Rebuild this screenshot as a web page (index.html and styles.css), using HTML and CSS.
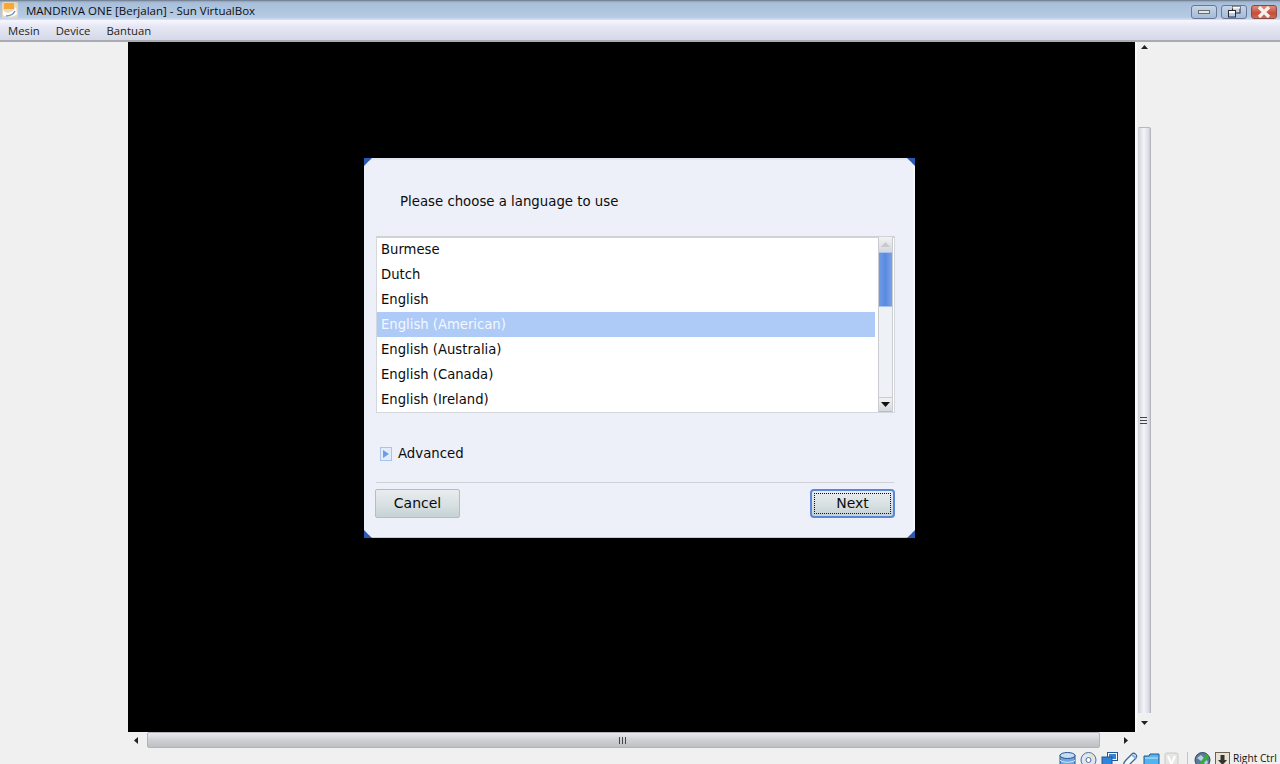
FILE: index.html
```html
<!DOCTYPE html>
<html lang="id">
<head>
<meta charset="utf-8">
<title>MANDRIVA ONE [Berjalan] - Sun VirtualBox</title>
<link rel="stylesheet" href="styles.css">
</head>
<body>
<div class="window">
  <header class="titlebar">
    <svg class="app-icon" width="18" height="18" viewBox="0 0 18 18"><rect x="1" y="1" width="16" height="16" rx="2" fill="#e9d9b8"/><path d="M3 2h10v6H3z" fill="#f3a83c"/><path d="M2 9c3 4 9 4 13-3l1 7c-3 3-10 4-14 1z" fill="#fff"/><path d="M5 15c3 0 7-1 9-5" stroke="#6f93c8" stroke-width="1.500" fill="none"/></svg>
    <span class="title-text">MANDRIVA ONE [Berjalan] - Sun VirtualBox</span>
    <div class="win-controls">
      <button class="win-btn"><svg width="12" height="4" viewBox="0 0 12 4"><rect x="0.500" y="0.500" width="11" height="3" fill="#e6e6e6" stroke="#6a6a6a"/></svg></button>
      <button class="win-btn"><svg width="14" height="13" viewBox="0 0 14 13"><rect x="5.500" y="1.500" width="7.500" height="6.500" fill="#c6d4e6" stroke="#2b2b2b"/><rect x="5.500" y="1.500" width="7.500" height="2" fill="#fff"/><rect x="1.500" y="5.500" width="7" height="6.500" fill="#b9cbe2" stroke="#2b2b2b"/><rect x="2" y="6" width="6" height="2" fill="#fff"/></svg></button>
      <button class="win-btn win-close"><svg width="14" height="12" viewBox="0 0 14 12"><path d="M2 1l10 10M12 1L2 11" stroke="#f4f0ec" stroke-width="3.400"/></svg></button>
    </div>
  </header>
  <nav class="menubar"><span>Mesin</span><span>Device</span><span>Bantuan</span></nav>
  <main class="content">
    <div class="vm-screen">
      <section class="dialog">
        <i class="corner tl"></i><i class="corner tr"></i><i class="corner bl"></i><i class="corner br"></i>
        <p class="prompt">Please choose a language to use</p>
        <div class="listbox">
          <ul class="rows">
            <li>Burmese</li>
            <li>Dutch</li>
            <li>English</li>
            <li class="selected">English (American)</li>
            <li>English (Australia)</li>
            <li>English (Canada)</li>
            <li>English (Ireland)</li>
          </ul>
          <div class="list-scroll">
            <div class="ls-btn ls-up"><svg width="9" height="5" viewBox="0 0 9 5"><path d="M4.500 0L9 5H0z" fill="#c4c8d0"/></svg></div>
            <div class="ls-thumb"></div>
            <div class="ls-track"></div>
            <div class="ls-btn ls-down"><svg width="9" height="5" viewBox="0 0 9 5"><path d="M0 0h9L4.500 5z" fill="#111"/></svg></div>
          </div>
        </div>
        <div class="advanced">
          <span class="expander"><svg width="6" height="8" viewBox="0 0 6 8"><path d="M0 0l6 4-6 4z" fill="#6f9be8"/></svg></span>
          <span>Advanced</span>
        </div>
        <hr class="sep">
        <div class="actions">
          <button class="btn"><span class="btn-label">Cancel</span></button>
          <button class="btn btn-default"><span class="focus"><span class="btn-label">Next</span></span></button>
        </div>
      </section>
    </div>
    <div class="vscroll">
      <div class="sb-arrow sb-up"><svg width="7" height="4" viewBox="0 0 7 4"><path d="M3.500 0L7 4H0z" fill="#222"/></svg></div>
      <div class="vs-track"></div>
      <div class="vs-thumb"><svg width="7" height="7" viewBox="0 0 7 7"><path d="M0 .5h7M0 3.500h7M0 6.500h7" stroke="#444"/></svg></div>
      <div class="sb-arrow sb-down"><svg width="7" height="4" viewBox="0 0 7 4"><path d="M0 0h7L3.500 4z" fill="#222"/></svg></div>
    </div>
  </main>
  <div class="hscroll-row">
    <div class="hscroll">
      <div class="hs-arrow hs-left"><svg width="4" height="7" viewBox="0 0 4 7"><path d="M4 0v7L0 3.500z" fill="#222"/></svg></div>
      <div class="hs-thumb"><svg width="7" height="7" viewBox="0 0 7 7"><path d="M.5 0v7M3.500 0v7M6.500 0v7" stroke="#444"/></svg></div>
      <div class="hs-arrow hs-right"><svg width="4" height="7" viewBox="0 0 4 7"><path d="M0 0v7l4-3.500z" fill="#222"/></svg></div>
    </div>
  </div>
  <footer class="statusbar">
    <svg class="st" width="17" height="16" viewBox="0 0 17 16"><path d="M1 3v10c0 2 15 2 15 0V3z" fill="#6fa6dc" stroke="#27568f"/><ellipse cx="8.500" cy="3.500" rx="7.500" ry="3" fill="#c6dcf2" stroke="#27568f"/><path d="M1 8c2 3 13 3 15 0" fill="none" stroke="#dcecf9"/></svg>
    <svg class="st" width="17" height="16" viewBox="0 0 17 16"><circle cx="8.500" cy="8" r="7.500" fill="#dfe6ee" stroke="#4a6f9c"/><circle cx="8.500" cy="8" r="2.500" fill="#fff" stroke="#4a6f9c"/><path d="M10 2l3 3" stroke="#f0e4a8" stroke-width="2"/></svg>
    <svg class="st" width="17" height="16" viewBox="0 0 17 16"><rect x="6.500" y="0.500" width="10" height="8" fill="#fff" stroke="#27568f"/><rect x="8" y="2" width="7" height="5" fill="#2f85dc"/><rect x="1" y="5" width="10" height="10" fill="#2f85dc" stroke="#27568f"/></svg>
    <svg class="st" width="17" height="16" viewBox="0 0 17 16"><path d="M2 15c-1-3 0-5 2-7l6-6c2-2 6 1 4 4l-7 7c-1 1-4 3-5 2z" fill="#f4f7fb" stroke="#3a689c" stroke-width="1.300"/><path d="M10 3l4 3" stroke="#7fb0e0" stroke-width="2"/></svg>
    <svg class="st" width="17" height="16" viewBox="0 0 17 16"><path d="M1 4h5l1-2h9v13H1z" fill="#55b4ee" stroke="#27568f"/><path d="M2 6h13" stroke="#bfe6fb"/></svg>
    <svg class="st" width="15" height="16" viewBox="0 0 15 16"><rect x="1" y="1" width="13" height="14" rx="2" fill="#e6e6e4" stroke="#c9c9c6"/><path d="M4 4l3.500 8L11 4" fill="none" stroke="#fff" stroke-width="2"/></svg>
    <i class="st-sep"></i>
    <svg class="st st-globe" width="17" height="16" viewBox="0 0 17 16"><circle cx="8.500" cy="8" r="7.500" fill="#5c7a9a" stroke="#2f4660"/><path d="M3 6l4-3 3 3-3 3zM10 10l3-2 1 3-3 2z" fill="#b8cfe2"/><path d="M5 15L14 3" stroke="#35b035" stroke-width="3"/></svg>
    <span class="st-key"><svg width="9" height="10" viewBox="0 0 9 10"><path d="M2.500 0h4v5H9L4.500 10 0 5h2.500z" fill="#333"/></svg></span>
    <span class="st-label">Right Ctrl</span>
  </footer>
</div>
</body>
</html>
```

FILE: styles.css
```css
* { box-sizing: border-box; }
html, body { margin: 0; padding: 0; height: 100%; overflow: hidden; }
body { background: #f0f0f0; font-family: "Open Sans", "Noto Sans", sans-serif; color: #111; }
svg { display: block; flex: none; }
.window { width: 1280px; height: 764px; display: flex; flex-direction: column; overflow: hidden; }

/* title bar */
.titlebar {
  height: 20px; flex: none; display: flex; align-items: center;
  background: linear-gradient(#5f6670 0, #8ea3bf 1px, #a9bfd9 3px, #b6cae3 17px, #d5e2f1 20px);
}
.app-icon { margin-left: 1px; }
.title-text { margin-left: 7px; font-size: 11.500px; color: #0c0f14; white-space: nowrap; }
.win-controls { margin-left: auto; display: flex; gap: 4px; margin-right: 3px; padding-top: 3px; }
.win-btn {
  width: 26px; height: 14px; padding: 0; display: flex; align-items: center; justify-content: center;
  border: 1px solid #66799a; border-radius: 3px;
  background: linear-gradient(#c5d5e8, #a5bad6);
}
.win-close { border-color: #8a4a44; background: linear-gradient(#de8c7c, #c64c3a 60%, #cf6a56); }

/* menu */
.menubar {
  height: 22px; flex: none; display: flex; align-items: center; gap: 16px; padding: 0 0 0 8px;
  font-size: 11.300px; color: #1c1e24;
  background: linear-gradient(#f6f7fd, #e6e8f4 6px, #d5d8e8);
  border-bottom: 2px solid #a8abb2;
}

/* guest area */
.content { flex: 1; min-height: 0; display: flex; padding-left: 128px; background: #f0f0f0; }
.vm-screen { width: 1007px; background: #000; padding: 116px 0 0 236px; }

.dialog {
  position: relative; width: 551px; height: 380px;
  background: #edf0f8; border-radius: 6px; padding: 0 20px 0 11px;
  border-bottom: 1px solid #c6c9d0;
  box-shadow: inset 0 2px 1px #e2e6f0, inset -2px 0 1px #f7f9fd;
  font-family: "DejaVu Sans", sans-serif; font-size: 13.300px; color: #0c0c0c;
}
.corner { position: absolute; width: 8px; height: 8px; }
.tl { left: 0; top: 0; clip-path: polygon(0 0, 100% 0, 0 100%); background: radial-gradient(circle at 100% 100%, #edf0f8 5px, #2c59b4 6px); }
.tr { right: 0; top: 0; clip-path: polygon(0 0, 100% 0, 100% 100%); background: radial-gradient(circle at 0 100%, #edf0f8 5px, #2c59b4 6px); }
.bl { left: 0; bottom: -1px; clip-path: polygon(0 0, 100% 100%, 0 100%); background: radial-gradient(circle at 100% 0, #edf0f8 5px, #2c59b4 6px); }
.br { right: 0; bottom: -1px; clip-path: polygon(100% 0, 100% 100%, 0 100%); background: radial-gradient(circle at 0 0, #edf0f8 5px, #2c59b4 6px); }
.prompt { margin: 0; padding: 34px 0 0 25px; height: 78px; line-height: 19px; }

.listbox {
  width: 519px; height: 177px; margin-left: 1px; display: flex;
  background: #fff; border: 1px solid #d4d7db; border-top: 2px solid #cfd2d6; padding-right: 1px;
}
.rows { list-style: none; margin: -1px 0 0; padding: 0; width: 498px; flex: none; font-size: 13.200px; }
.rows li { height: 25px; line-height: 25px; padding-left: 4px; white-space: nowrap; }
.rows li.selected { background: #aecbf8; color: #f4f7fd; }
.list-scroll {
  margin: -1px 0 0 3px; width: 15px; display: flex; flex-direction: column;
  background: #eef1f6; border: 1px solid #c9ccd1; border-width: 0 1px;
}
.ls-btn { height: 15px; flex: none; display: flex; align-items: center; justify-content: center; background: linear-gradient(#f2f2f2, #d5d8dc); }
.ls-down { border-top: 1px solid #c9ccd1; border-bottom: 1px solid #b9bcc1; }
.ls-thumb { height: 55px; flex: none; background: linear-gradient(90deg, #6f9ae6, #5a8ae0 50%, #7ba3ea); border: 1px solid #a9c2ee; border-width: 1px 0; }
.ls-track { flex: 1; }

.advanced { display: flex; align-items: center; gap: 6px; height: 20px; margin: 31px 0 0 5px; line-height: 20px; }
.expander {
  width: 12px; height: 14px; display: flex; align-items: center; justify-content: center;
  background: #e3ecfb; border: 1px solid #a7c3f2;
}
.sep { height: 1px; margin: 18px 0 0 1px; width: 518px; border: 0; background: #ced1d6; }
.actions { display: flex; justify-content: space-between; margin-top: 6px; width: 520px; }
.btn {
  width: 85px; height: 29px; padding: 0 0 2px; font: inherit; font-size: 14px; color: inherit; display: flex; align-items: center; justify-content: center;
  border: 1px solid #b6bdc2; border-radius: 2px;
  background: linear-gradient(#e9edef, #d8e0e2 55%, #c6d2d5);
}
.btn-default { border: 2px solid #5a86d8; border-radius: 4px; padding: 2px; }
.focus { flex: 1; align-self: stretch; display: flex; align-items: center; justify-content: center; border: 1px dotted #111; padding-bottom: 1px; }

/* VirtualBox scrollbars */
.vscroll { width: 16px; display: flex; flex-direction: column; align-items: stretch; padding-left: 1px; border-left: 2px solid #fafafa; }
.sb-arrow { flex: none; display: flex; align-items: center; justify-content: center; }
.sb-up { height: 18px; padding-bottom: 8px; }
.sb-down { height: 19px; }
.vs-track { height: 67px; flex: none; }
.vs-thumb {
  flex: 1; display: flex; align-items: center; justify-content: center; padding-right: 2px;
  background: linear-gradient(90deg, #cfd0da, #f4f4f8 45%, #d8d9e2 85%, #a9aab4);
  border-radius: 2px 2px 0 0; border-top: 1px solid #b6b7c0;
}
.hscroll-row { height: 16px; flex: none; padding-left: 128px; }
.hscroll { width: 1007px; height: 16px; display: flex; align-items: stretch; }
.hs-arrow { width: 19px; flex: none; display: flex; align-items: center; justify-content: center; }
.hs-left { padding-right: 4px; }
.hs-right { margin-left: auto; width: 35px; padding-left: 17px; }
.hs-thumb {
  width: 953px; flex: none; display: flex; align-items: center; justify-content: center; padding-right: 2px;
  background: linear-gradient(#e9e9ef, #cfd0d4 50%, #bfc0c4);
  border: 1px solid #b2b3bb; border-radius: 2px;
}

/* status */
.statusbar {
  height: 16px; flex: none; display: flex; align-items: flex-start; padding: 4px 0 0 1059px; overflow: hidden; background: #f0f0f0;
}
.st { margin-right: 4px; }
.st-sep { width: 1px; height: 12px; background: #c4c4c4; margin: 0 6px 0 4px; flex: none; }
.st-key {
  width: 15px; height: 16px; flex: none; display: flex; justify-content: center; padding-top: 2px;
  background: #e8e2d4; border: 1px solid #6d6252;
}
.st-label { margin-left: 3px; font-size: 10.200px; line-height: 12px; color: #111; white-space: nowrap; }
```
